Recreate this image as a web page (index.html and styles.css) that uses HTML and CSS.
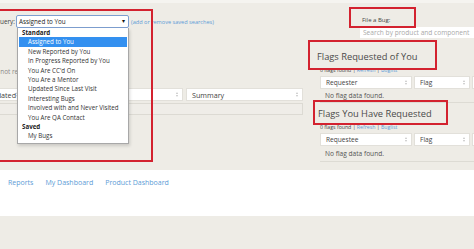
FILE: index.html
```html
<!DOCTYPE html>
<html lang="en">
<head>
    <meta charset="UTF-8">
    <meta name="viewport" content="width=device-width, initial-scale=1.0">
    <title>My Dashboard</title>
    <link rel="stylesheet" href="styles.css">
</head>
<body>
    <div class="top-strip"></div>
    <div class="dashboard">
        <section class="queries">
            <div class="query-row">
                <label class="query-label">Saved Query:</label>
                <div class="select-wrap">
                    <div class="select">Assigned to You<span class="caret">&#9662;</span></div>
                    <ul class="dropdown">
                        <li class="group">Standard</li>
                        <li class="selected">Assigned to You</li>
                        <li>New Reported by You</li>
                        <li>In Progress Reported by You</li>
                        <li>You Are CC'd On</li>
                        <li>You Are a Mentor</li>
                        <li>Updated Since Last Visit</li>
                        <li>Interesting Bugs</li>
                        <li>Involved with and Never Visited</li>
                        <li>You Are QA Contact</li>
                        <li class="group">Saved</li>
                        <li>My Bugs</li>
                    </ul>
                </div>
                <a class="small-link" href="#">(add or remove saved searches)</a>
            </div>
            <p class="status">Bugs not refreshed yet</p>
            <div class="bug-head">
                <div class="head-cell">ID<span class="sort"></span></div>
                <div class="head-cell">Updated<span class="sort"></span></div>
                <div class="head-cell">Status<span class="sort"></span></div>
                <div class="head-cell summary">Summary<span class="sort"></span></div>
            </div>
            <div class="bug-row"></div>
        </section>

        <aside class="flags">
            <div class="file-bug">File a Bug:</div>
            <input class="search" type="text" placeholder="Search by product and component">

            <h2 class="flag-title first">Flags Requested of You</h2>
            <p class="flag-meta">0 flags found | <a href="#">Refresh</a> | <a href="#">Buglist</a></p>
            <div class="flag-head">
                <div class="flag-cell wide">Requester<span class="sort"></span></div>
                <div class="flag-cell">Flag<span class="sort"></span></div>
                <div class="flag-cell">Bug<span class="sort"></span></div>
            </div>
            <div class="flag-empty">No flag data found.</div>

            <h2 class="flag-title">Flags You Have Requested</h2>
            <p class="flag-meta">0 flags found | <a href="#">Refresh</a> | <a href="#">Buglist</a></p>
            <div class="flag-head">
                <div class="flag-cell wide">Requestee<span class="sort"></span></div>
                <div class="flag-cell">Flag<span class="sort"></span></div>
                <div class="flag-cell">Bug<span class="sort"></span></div>
            </div>
            <div class="flag-empty last">No flag data found.</div>
        </aside>
    </div>

    <nav class="footer-links">
        <a href="#">Reports</a>
        <a href="#">My Dashboard</a>
        <a href="#">Product Dashboard</a>
    </nav>

    <!-- annotation boxes drawn over the screenshot -->
    <div class="mark mark-query"></div>
    <div class="mark mark-file"></div>
    <div class="mark mark-flags-of"></div>
    <div class="mark mark-flags-by"></div>
</body>
</html>
```

FILE: styles.css
```css
body {
    margin: 0;
    width: 474px;
    height: 249px;
    overflow: hidden;
    position: relative;
    background: #eeece6;
    font-family: "Open Sans", "Liberation Sans", sans-serif;
    color: #444;
}
a {
    color: #5c9bd6;
    text-decoration: none;
}
.top-strip {
    height: 3px;
    background: #f5f4f0;
}
.dashboard {
    display: flex;
    height: 167px;
}

/* left: saved queries */
.queries {
    flex: none;
    width: 368px;
    margin-left: -60px;
}
.query-row {
    display: flex;
    align-items: center;
    margin-top: 12px;
    height: 13px;
}
.query-label {
    width: 75px;
    text-align: right;
    font-size: 6.4px;
    color: #444;
}
.select-wrap {
    position: relative;
    margin-left: 1px;
}
.select {
    box-sizing: border-box;
    width: 113px;
    height: 13px;
    border: 1px solid #7d9fd0;
    border-radius: 2px;
    background: #fff;
    font-size: 6.3px;
    line-height: 11px;
    padding-left: 2px;
    color: #222;
    position: relative;
}
.caret {
    position: absolute;
    right: 3px;
    top: 0;
    font-size: 6px;
    color: #111;
}
.dropdown {
    position: absolute;
    top: 13px;
    left: 1px;
    width: 112px;
    box-sizing: border-box;
    margin: 0;
    padding: 0 1px 2px;
    list-style: none;
    background: #fff;
    border: 1px solid #a8a8a8;
    border-top: none;
    box-shadow: 1px 2px 3px rgba(0, 0, 0, 0.15);
    z-index: 2;
}
.dropdown li {
    height: 9.4px;
    line-height: 9.4px;
    font-size: 6.2px;
    padding-left: 9px;
    color: #333;
    white-space: nowrap;
}
.dropdown .group {
    font-weight: bold;
    padding-left: 3px;
    color: #222;
}
.dropdown .selected {
    background: #3390f0;
    color: #fff;
}
.small-link {
    margin-left: 2px;
    font-size: 5.6px;
}
.status {
    margin: 39px 0 0 44px;
    font-size: 6.4px;
    line-height: 9px;
    color: #888;
}
.bug-head {
    display: grid;
    grid-template-columns: 38px 39px 160px 117px;
    column-gap: 3px;
    margin-top: 12px;
}
.head-cell {
    display: flex;
    align-items: center;
    justify-content: space-between;
    height: 13px;
    box-sizing: border-box;
    padding: 0 4px 0 5px;
    background: #fff;
    border: 1px solid #e2e0da;
    font-size: 7.2px;
    color: #444;
}
.bug-row {
    height: 12px;
    width: 363px;
    margin-top: 2px;
    box-sizing: border-box;
    border: 1px solid #dcdad3;
    background: #efede8;
}
.sort {
    display: inline-flex;
    flex-direction: column;
    gap: 1px;
}
.sort::before,
.sort::after {
    content: "";
    border-left: 1.5px solid transparent;
    border-right: 1.5px solid transparent;
}
.sort::before {
    border-bottom: 2px solid #c4c4c4;
}
.sort::after {
    border-top: 2px solid #c4c4c4;
}

/* right: flags */
.flags {
    flex: none;
    width: 166px;
}
.file-bug {
    margin: 13px 0 0 54px;
    font-size: 6px;
    line-height: 9px;
    color: #444;
}
.search {
    display: block;
    box-sizing: border-box;
    width: 130px;
    height: 11px;
    margin: 2px 0 0 52px;
    padding: 0 3px;
    border: none;
    background: #fff;
    font-family: inherit;
    font-size: 6.6px;
}
.search::placeholder {
    color: #a9a9a9;
}
.flag-title {
    margin: 4px 0 0 10px;
    font-size: 9.3px;
    line-height: 14px;
    font-weight: normal;
    color: #4a4a4a;
}
.flag-title.first {
    margin: 12px 0 0 9px;
}
.flag-meta {
    margin: 3px 0 0 12px;
    font-size: 5.2px;
    line-height: 7px;
    color: #444;
}
.flag-head {
    display: grid;
    grid-template-columns: 92px 56px 40px;
    column-gap: 2px;
    margin: 2px 0 0 12px;
}
.flag-cell {
    display: flex;
    align-items: center;
    justify-content: space-between;
    height: 13px;
    box-sizing: border-box;
    padding: 0 4px 0 5px;
    background: #fff;
    border: 1px solid #e2e0da;
    font-size: 6.6px;
    color: #444;
}
.flag-empty {
    margin-left: 12px;
    height: 13px;
    padding-left: 5px;
    line-height: 13px;
    font-size: 6.6px;
    color: #555;
    border-bottom: 1px solid #dddbd4;
}
.flag-empty.last {
    height: 15px;
    line-height: 15px;
}

/* footer */
.footer-links {
    display: flex;
    gap: 12px;
    height: 46px;
    box-sizing: border-box;
    padding: 8px 0 0 8px;
    background: #fff;
    font-size: 7px;
    line-height: 9px;
}

/* red annotation boxes */
.mark {
    position: absolute;
    border: 2px solid #d3222f;
    box-sizing: border-box;
    z-index: 3;
}
.mark-query {
    left: -6px;
    top: 9px;
    width: 159px;
    height: 153px;
}
.mark-file {
    left: 349px;
    top: 7px;
    width: 67px;
    height: 21px;
}
.mark-flags-of {
    left: 308px;
    top: 40px;
    width: 129px;
    height: 30px;
}
.mark-flags-by {
    left: 313px;
    top: 100px;
    width: 135px;
    height: 25px;
}
```
